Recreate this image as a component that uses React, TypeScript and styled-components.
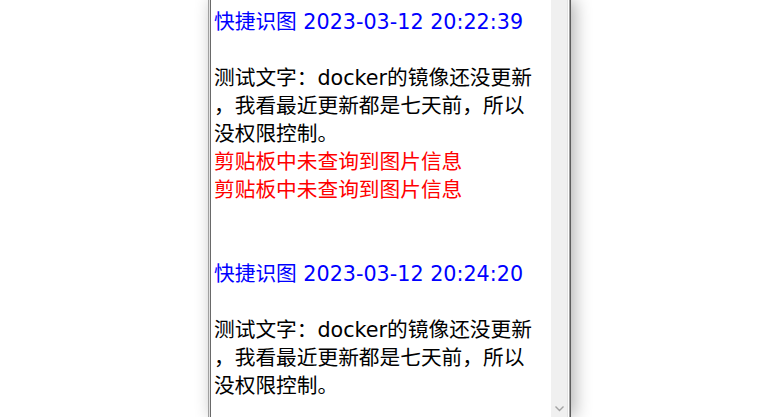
import React from "react";
import styled, { createGlobalStyle } from "styled-components";

const Global = createGlobalStyle`
  html, body {
    margin: 0;
    padding: 0;
    background: #ffffff;
    overflow: hidden;
  }
  #root {
    width: 774px;
    height: 417px;
  }
`;

const Page = styled.div`
  width: 774px;
  height: 417px;
  display: flex;
  background: #ffffff;
  overflow: hidden;
`;

const Window = styled.div`
  margin-left: 208px;
  width: 363px;
  height: 417px;
  box-sizing: border-box;
  display: flex;
  border-left: 1px solid #a0a0a0;
  border-right: 1px solid #5c5c5c;
  box-shadow: 4px 0 16px rgba(0, 0, 0, 0.3);
`;

const Bevel = styled.div`
  flex: 1;
  display: flex;
  border-left: 1px solid #e3e3e3;
  border-right: 1px solid #a0a0a0;
`;

const Sunken = styled.div`
  flex: 1;
  display: flex;
  border-left: 1px solid #696969;
  border-right: 1px solid #ffffff;
`;

const Memo = styled.div`
  flex: 1;
  background: #ffffff;
  padding: 8px 0 0 3px;
  overflow: hidden;
  font-family: "DejaVu Sans", "Noto Sans CJK SC", sans-serif;
  font-size: 20.7px;
  line-height: 28px;
  white-space: pre;
`;

const Line = styled.div<{ $tone: "blue" | "red" | "black" }>`
  height: 28px;
  color: ${(p) =>
    p.$tone === "blue" ? "#0000ff" : p.$tone === "red" ? "#ff0000" : "#000000"};
`;

const ScrollBar = styled.div`
  width: 16px;
  background: #f0f0f0;
  border-right: 1px solid #e3e3e3;
  display: flex;
  flex-direction: column;
  justify-content: flex-end;
  align-items: center;
`;

const ArrowButton = styled.div`
  width: 16px;
  height: 17px;
  display: flex;
  align-items: center;
  justify-content: center;
`;

type Tone = "blue" | "red" | "black";

const lines: { text: string; tone: Tone }[] = [
  { text: "快捷识图 2023-03-12 20:22:39", tone: "blue" },
  { text: "", tone: "black" },
  { text: "测试文字：docker的镜像还没更新", tone: "black" },
  { text: "，我看最近更新都是七天前，所以", tone: "black" },
  { text: "没权限控制。", tone: "black" },
  { text: "剪贴板中未查询到图片信息", tone: "red" },
  { text: "剪贴板中未查询到图片信息", tone: "red" },
  { text: "", tone: "black" },
  { text: "", tone: "black" },
  { text: "快捷识图 2023-03-12 20:24:20", tone: "blue" },
  { text: "", tone: "black" },
  { text: "测试文字：docker的镜像还没更新", tone: "black" },
  { text: "，我看最近更新都是七天前，所以", tone: "black" },
  { text: "没权限控制。", tone: "black" },
];

export default function App() {
  return (
    <>
      <Global />
      <Page>
        <Window>
          <Bevel>
            <Sunken>
              <Memo>
                {lines.map((l, i) => (
                  <Line key={i} $tone={l.tone}>
                    {l.text}
                  </Line>
                ))}
              </Memo>
              <ScrollBar>
                <ArrowButton>
                  <svg width="9" height="6" viewBox="0 0 9 6">
                    <path
                      d="M0.5 0.5 L4.5 4.5 L8.5 0.5"
                      fill="none"
                      stroke="#a3a3a3"
                      strokeWidth="1.4"
                    />
                  </svg>
                </ArrowButton>
              </ScrollBar>
            </Sunken>
          </Bevel>
        </Window>
      </Page>
    </>
  );
}
